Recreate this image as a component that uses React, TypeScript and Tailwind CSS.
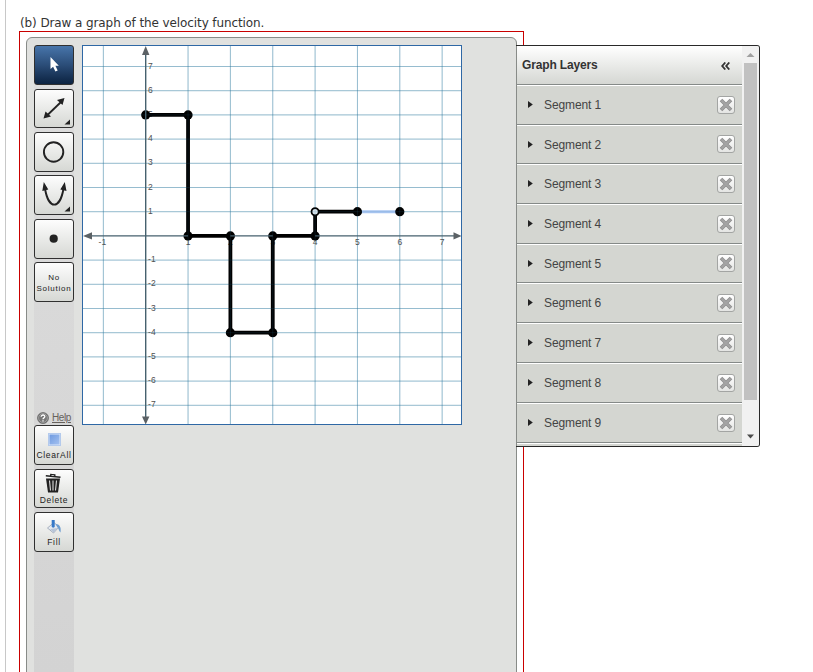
import type { ReactNode } from 'react';
import clsx from 'clsx';

interface Point {
  x: number;
  y: number;
  open?: boolean;
}

const ORIGIN_X = 63.2;
const ORIGIN_Y = 190.4;
const UNIT_X = 42.35;
const UNIT_Y = 24.2;

const px = (x: number) => ORIGIN_X + x * UNIT_X;
const py = (y: number) => ORIGIN_Y - y * UNIT_Y;

const points: Point[] = [
  { x: 0, y: 5 },
  { x: 1, y: 5 },
  { x: 1, y: 0 },
  { x: 2, y: 0 },
  { x: 2, y: -4 },
  { x: 3, y: -4 },
  { x: 3, y: 0 },
  { x: 4, y: 0 },
  { x: 4, y: 1, open: true },
  { x: 5, y: 1 },
  { x: 6, y: 1 },
];

const xTicks = [-1, 1, 2, 3, 4, 5, 6, 7];
const yTicks = [7, 6, 5, 4, 3, 2, 1, -1, -2, -3, -4, -5, -6, -7];

const segments = [
  { name: 'Segment 1', height: 'h-[40px]' },
  { name: 'Segment 2', height: 'h-[39px]' },
  { name: 'Segment 3', height: 'h-[40px]' },
  { name: 'Segment 4', height: 'h-[40px]' },
  { name: 'Segment 5', height: 'h-[39px]' },
  { name: 'Segment 6', height: 'h-[40px]' },
  { name: 'Segment 7', height: 'h-[40px]' },
  { name: 'Segment 8', height: 'h-[40px]' },
  { name: 'Segment 9', height: 'h-[40px]' },
];

function ToolButton({ children, className, active }: { children: ReactNode; className: string; active?: boolean }) {
  return (
    <button
      className={clsx(
        'flex w-10 shrink-0 flex-col items-center rounded-[3px] border border-[#303030] bg-gradient-to-b overflow-hidden',
        active ? 'from-[#4775ab] via-[#2b4d78] to-[#0c2341]' : 'from-[#fdfdfd] to-[#d6d8d4]',
        className
      )}
    >
      {children}
    </button>
  );
}

function CornerMark() {
  return <path d="M35 30.5V35.5H29.5Z" fill="#222" />;
}

function Toolbar() {
  return (
    <div className="flex w-10 flex-col bg-gradient-to-b from-[#dddddd] to-[#d2d2d2] font-['Liberation_Sans',sans-serif]">
      <ToolButton className="h-10" active>
        <svg className="h-[38px] w-[38px]" viewBox="0 0 38 38">
          <path d="M15.5 11V23L18.1 20.7L20.4 25.5L22.7 24.4L20.4 19.8H23.8Z" fill="#fff" />
        </svg>
      </ToolButton>
      <ToolButton className="mt-1 h-[39px]">
        <svg className="h-[37px] w-[38px]" viewBox="0 0 38 37">
          <path d="M12 25.5L26 12" stroke="#222" strokeWidth="1.8" />
          <path d="M8.5 28.5L10.5 21.5L16 26.5ZM29.5 8L27.5 15L22 10Z" fill="#222" />
          <path d="M35 29.5V34.5H29.5Z" fill="#222" />
        </svg>
      </ToolButton>
      <ToolButton className="mt-1 h-10">
        <svg className="h-[38px] w-[38px]" viewBox="0 0 38 38">
          <circle cx="18.6" cy="19" r="9.7" fill="none" stroke="#222" strokeWidth="1.9" />
        </svg>
      </ToolButton>
      <ToolButton className="mt-[3px] h-10">
        <svg className="h-[38px] w-[38px]" viewBox="0 0 38 38">
          <path d="M10 12.5C13.5 34 25 34 28.5 12.5" fill="none" stroke="#222" strokeWidth="1.9" />
          <path d="M8.8 6L13.3 13.5L7.3 15ZM29.8 6L31.5 15L25.3 13.5Z" fill="#222" />
          <CornerMark />
        </svg>
      </ToolButton>
      <ToolButton className="mt-1 h-10">
        <svg className="h-[38px] w-[38px]" viewBox="0 0 38 38">
          <circle cx="18.7" cy="18.7" r="4.1" fill="#222" />
        </svg>
      </ToolButton>
      <ToolButton className="mt-[3px] h-10">
        <span className="pt-[9px] text-center text-[8px] leading-[11px] tracking-[0.75px] text-[#222]">
          No
          <br />
          Solution
        </span>
      </ToolButton>

      <div className="mt-[110px] flex h-3 items-center gap-[3px] pl-[3px]">
        <svg className="h-3 w-3 shrink-0" viewBox="0 0 12 12">
          <circle cx="6" cy="6" r="5.5" fill="#777" stroke="#555" strokeWidth="0.6" />
          <circle cx="6" cy="6" r="4.4" fill="none" stroke="#aaa" strokeWidth="0.7" />
          <path d="M4.2 4.7C4.2 2.4 8 2.5 7.8 4.7C7.7 5.9 6 5.9 6 7.2M6 8.3V9.4" fill="none" stroke="#fff" strokeWidth="1.3" />
        </svg>
        <span className="text-[10px] leading-3 tracking-[-0.4px] text-[#66615c] underline">Help</span>
      </div>

      <ToolButton className="mt-px h-10">
        <svg className="mt-[7px] h-[13px] w-[13px] shrink-0" viewBox="0 0 13 13">
          <defs>
            <linearGradient id="clear" x1="0" y1="0" x2="1" y2="1">
              <stop offset="0" stopColor="#6f9ae0" />
              <stop offset="1" stopColor="#a3c1f0" />
            </linearGradient>
          </defs>
          <rect x="0.5" y="0.5" width="12" height="12" fill="#dce8fa" stroke="#b4caec" />
          <rect x="1.5" y="1.5" width="10" height="10" fill="url(#clear)" />
        </svg>
        <span className="mt-[4px] whitespace-nowrap text-[8.5px] leading-[11px] tracking-[0.65px] text-[#222]">
          ClearAll
        </span>
      </ToolButton>
      <ToolButton className="mt-1 h-[39px]">
        <svg className="mr-[2px] mt-[3px] h-5 w-[17px] shrink-0" viewBox="0 0 17 20">
          <path d="M0.8 2.7L15.5 4.3M5.8 2.9V1.4L9.8 1.8V3.2" fill="none" stroke="#222" strokeWidth="1.4" />
          <path d="M1 5.5H15L13 19.5H3Z" fill="#222" />
          <path d="M4.5 7.5L5.5 17.5M8 7.5V17.5M11.5 7.5L10.5 17.5" stroke="#ddd" strokeWidth="1.1" />
        </svg>
        <span className="mt-[2px] text-[8.5px] leading-[11px] tracking-[0.65px] text-[#222]">Delete</span>
      </ToolButton>
      <ToolButton className="mt-1 h-10">
        <svg className="mt-1 h-[17px] w-4 shrink-0" viewBox="0 0 16 17">
          <path d="M1.5 11L8 5.5L13 10L7.5 16Z" fill="#e6eaf0" stroke="#8a97aa" strokeWidth="0.7" />
          <path d="M4 12L11.5 11L7.5 15.5Z" fill="#b7c5d9" />
          <path d="M5.7 3H8.7V9.5C8.7 11 5.7 11 5.7 9.5Z" fill="#3679c8" />
          <path d="M9.5 7C13.5 7 15.5 10 14.5 15.5C13 14.5 13 12 11.5 10.5Z" fill="#6f9ed0" />
        </svg>
        <span className="mt-[3px] text-[8.5px] leading-[11px] tracking-[0.65px] text-[#222]">Fill</span>
      </ToolButton>
    </div>
  );
}

function Grid({ opacity }: { opacity: number }) {
  return (
    <g stroke="#2f7ba0" strokeOpacity={opacity}>
      {xTicks.map((x) => (
        <line key={x} x1={px(x)} x2={px(x)} y1="0" y2="380" />
      ))}
      {yTicks.map((y) => (
        <line key={y} x1="0" x2="380" y1={py(y)} y2={py(y)} />
      ))}
    </g>
  );
}

function VelocityGraph() {
  return (
    <svg
      className="ml-2 h-[380px] w-[380px] shrink-0 border border-[#2f68a5] bg-white font-['Liberation_Sans',sans-serif]"
      viewBox="0.5 0.5 378 378"
    >
      <Grid opacity={0.42} />

      {/* Tick labels */}
      <g fill="#505050" fontSize="8.5">
        {xTicks.map((x) => (
          <text key={x} x={px(x) + (x < 0 ? -1 : 0)} y={ORIGIN_Y + 9.2} textAnchor="middle">
            {x}
          </text>
        ))}
        {yTicks.map((y) => (
          <text key={y} x={ORIGIN_X + 2.4} y={py(y) + 2}>
            {y}
          </text>
        ))}
      </g>

      {/* Segments */}
      {points.slice(1).map((p, i) => {
        const last = i === points.length - 2;
        return (
          <line
            key={i}
            x1={px(points[i].x)}
            y1={py(points[i].y)}
            x2={px(p.x)}
            y2={py(p.y)}
            stroke={last ? '#a9c6f2' : '#000'}
            strokeWidth={last ? 3 : 3.8}
          />
        );
      })}
      {points.map((p, i) => (
        <circle
          key={i}
          cx={px(p.x)}
          cy={py(p.y)}
          r={p.open ? 3.6 : 4.6}
          fill={p.open ? '#d9e4ec' : '#000'}
          stroke={p.open ? '#000' : 'none'}
          strokeWidth="1.8"
        />
      ))}

      {/* Grid shows faintly through the strokes */}
      <Grid opacity={0.15} />

      {/* Axes */}
      <g stroke="#46616e" strokeWidth="1.4">
        <line x1="4" x2={px(1)} y1={ORIGIN_Y} y2={ORIGIN_Y} />
        <line x1={px(2)} x2={px(3)} y1={ORIGIN_Y} y2={ORIGIN_Y} />
        <line x1={px(4)} x2="375" y1={ORIGIN_Y} y2={ORIGIN_Y} />
        <line x1={ORIGIN_X} x2={ORIGIN_X} y1="4" y2="375" />
      </g>
      <g fill="#5b6165">
        <path d={`M0.5 ${ORIGIN_Y}l9 -3.7v7.4z`} />
        <path d={`M379 ${ORIGIN_Y}l-8 -3.7v7.4z`} />
        <path d={`M${ORIGIN_X} 0.5l-3.7 9h7.4z`} />
        <path d={`M${ORIGIN_X} 379l-3.7 -8h7.4z`} />
      </g>
    </svg>
  );
}

function RemoveButton() {
  return (
    <button className="mb-px flex h-[18px] w-[18px] items-center justify-center rounded-[3px] border border-[#a3a5a3] bg-gradient-to-b from-white to-[#e4e5e3]">
      <svg className="h-4 w-4 shrink-0" viewBox="0 0 16 16">
        <path d="M3 3L13 13M13 3L3 13" stroke="#8d8d8d" strokeWidth="3.6" />
        <path d="M3.5 3.5L12.5 12.5M12.5 3.5L3.5 12.5" stroke="#a4a4a4" strokeWidth="2.2" />
      </svg>
    </button>
  );
}

function LayersPanel() {
  return (
    <div className="flex h-[402px] w-[244px] overflow-hidden rounded-r-[3px] border-y border-r border-[#292929] bg-[#d4d6d1] font-['Liberation_Sans',sans-serif]">
      <div className="w-[226px] shrink-0 border-l border-[#888b88]">
        <div className="flex h-[39px] items-center justify-between border-b border-[#858a88] bg-gradient-to-b from-white to-[#d5d7d3] pl-[5px] pr-[12px] text-[#333]">
          <span className="text-[12px] font-bold tracking-[-0.15px]">Graph Layers</span>
          <svg className="mt-px h-2 w-[9px]" viewBox="0 0 9 8">
            <path d="M4.3 0.5L1.2 4L4.3 7.5M8.3 0.5L5.2 4L8.3 7.5" fill="none" stroke="#333" strokeWidth="1.8" />
          </svg>
        </div>
        {segments.map((segment) => (
          <div
            key={segment.name}
            className={clsx(
              'flex items-center border-b border-t border-b-[#858a88] border-t-white pl-[11px] pr-[7px]',
              segment.height
            )}
          >
            <svg className="mb-px mr-[10px] h-[7px] w-[5px]" viewBox="0 0 5 7">
              <path d="M0 0L4.8 3.5L0 7Z" fill="#222" />
            </svg>
            <span className="flex-1 pl-px text-[12px] tracking-[-0.1px] text-[#444]">{segment.name}</span>
            <RemoveButton />
          </div>
        ))}
        <div className="border-t border-white" />
      </div>

      {/* Scrollbar */}
      <div className="flex w-[17px] flex-col items-center bg-[#f1f1f1]">
        <svg className="h-[17px] w-[17px] shrink-0" viewBox="0 0 17 17">
          <path d="M4.500 11L8.500 7L12.500 11Z" fill="#a0a0a0" />
        </svg>
        <div className="h-[337px] w-[13px] shrink-0 bg-[#c1c1c1]" />
        <div className="flex-1" />
        <svg className="h-[17px] w-[17px] shrink-0" viewBox="0 0 17 17">
          <path d="M5 5.5H12L8.5 9.5Z" fill="#4b4b4b" />
        </svg>
      </div>
    </div>
  );
}

export default function App() {
  return (
    <div className="h-[672px] w-[813px] overflow-hidden bg-white pl-[5px]">
      <div className="h-full border-l border-[#c8c8c8] pl-[13px] pt-[15px]">
        <p className="h-4 whitespace-nowrap pl-px font-['DejaVu_Sans',sans-serif] text-[12px] leading-4 tracking-[-0.1px] text-[#333]">
          (b) Draw a graph of the velocity function.
        </p>
        <div className="relative h-[700px] w-[505px] border border-[#c90000] pl-1.5 pt-[5px]">
          <div className="flex h-[700px] w-[491px] rounded-t-[6px] border border-[#888b88] bg-[#e0e1df] pl-[7px] pt-[7px]">
            <Toolbar />
            <VelocityGraph />
          </div>
          {/* Layers panel slides out over the right edge of the frame */}
          <div className="absolute left-[496px] top-[13px]">
            <LayersPanel />
          </div>
        </div>
      </div>
    </div>
  );
}
